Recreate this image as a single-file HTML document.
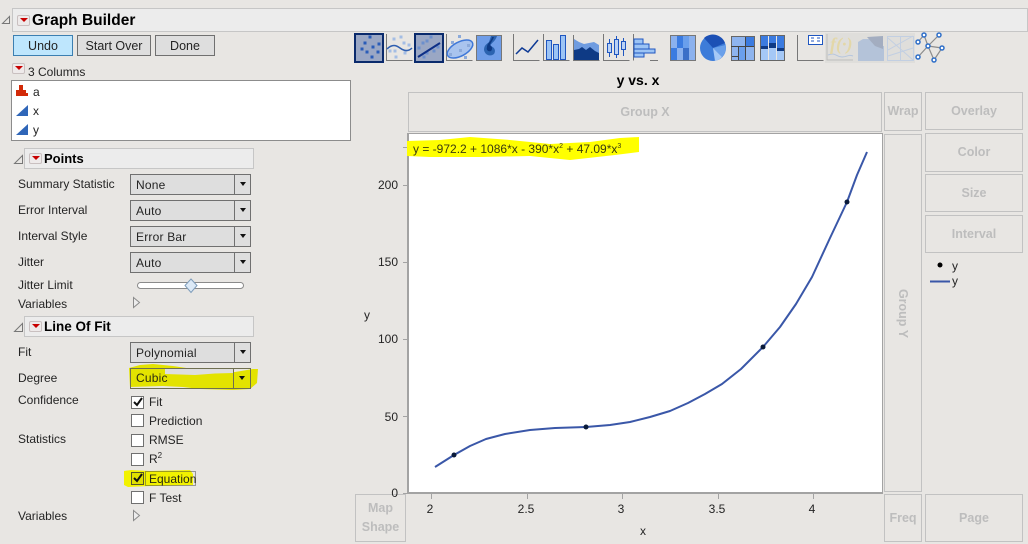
<!DOCTYPE html>
<html><head><meta charset="utf-8">
<style>
html,body{margin:0;padding:0}
body{width:1028px;height:544px;overflow:hidden;background:#e8e6e3;position:relative;font-family:"Liberation Sans",sans-serif;font-size:12px;color:#242424}
.t{position:absolute;line-height:16px;white-space:nowrap}
.b{position:absolute;box-sizing:border-box}
.sel{position:absolute;box-sizing:border-box;left:130px;width:121px;height:21px;background:#dedede;border:1px solid #707070;line-height:20px;padding-left:5px;letter-spacing:.2px}
.sel i{position:absolute;left:103px;top:0;width:16px;height:19px;border-left:1px solid #707070}
.sel i:after{content:"";position:absolute;left:5px;top:7px;border-style:solid;border-width:4px 3px 0 3px;border-color:#111 transparent transparent transparent}
.btn{position:absolute;box-sizing:border-box;top:35px;height:21px;background:#dedede;border:1px solid #707070;text-align:center;line-height:20px;font-size:12.5px}
.z{position:absolute;box-sizing:border-box;border:1px solid #c2c2c2;display:flex;align-items:center;justify-content:center;text-align:center;font-weight:bold;color:#bdbdbd;font-size:12.5px;line-height:19px}
.hd{position:absolute;box-sizing:border-box;background:#ececec;border:1px solid #c6c6c6}
.m{position:absolute;width:13px;height:11px;box-sizing:border-box;background:#eeeaea;border:1px solid #c9c0c0;border-radius:2px}
.m:after{content:"";position:absolute;left:2px;top:2px;border-style:solid;border-width:4px 4px 0 4px;border-color:#c80000 transparent transparent transparent}
.cb{position:absolute;left:131px;width:13px;height:13px;box-sizing:border-box;background:#fff;border:1px solid #707070}
svg{position:absolute;left:0;top:0}
</style></head>
<body>
<div class="hd" style="left:12px;top:8px;width:1016px;height:24px"></div>
<div class="m" style="left:17px;top:15px"></div>
<div class="t" style="left:32px;top:13px;font-size:15.500px;font-weight:bold;color:#000">Graph Builder</div>
<div class="btn" style="left:13px;width:60px;background:#bee6fd;border-color:#3c7fb1">Undo</div>
<div class="btn" style="left:77px;width:74px">Start Over</div>
<div class="btn" style="left:155px;width:60px">Done</div>
<div class="m" style="left:12px;top:63px"></div>
<div class="t" style="left:28px;top:64px">3 Columns</div>
<div class="b" style="left:11px;top:80px;width:340px;height:61px;background:#fff;border:1px solid #8c8c8c"></div>
<div class="t" style="left:33px;top:84px">a</div>
<div class="t" style="left:33px;top:103px">x</div>
<div class="t" style="left:33px;top:122px">y</div>

<div class="hd" style="left:24px;top:148px;width:230px;height:21px"></div>
<div class="m" style="left:29px;top:153px"></div>
<div class="t" style="left:44px;top:151px;font-weight:bold;font-size:13px;color:#000">Points</div>
<div class="hd" style="left:24px;top:316px;width:230px;height:21px"></div>
<div class="m" style="left:29px;top:321px"></div>
<div class="t" style="left:44px;top:319px;font-weight:bold;font-size:13.500px;color:#000">Line Of Fit</div>

<div class="t" style="left:18px;top:176px">Summary Statistic</div>
<div class="t" style="left:18px;top:202px">Error Interval</div>
<div class="t" style="left:18px;top:228px">Interval Style</div>
<div class="t" style="left:18px;top:254px">Jitter</div>
<div class="t" style="left:18px;top:277px">Jitter Limit</div>
<div class="t" style="left:18px;top:296px">Variables</div>
<div class="t" style="left:18px;top:344px">Fit</div>
<div class="t" style="left:18px;top:370px">Degree</div>
<div class="t" style="left:18px;top:392px">Confidence</div>
<div class="t" style="left:18px;top:431px">Statistics</div>
<div class="t" style="left:18px;top:508px">Variables</div>

<div class="sel" style="top:174px">None<i></i></div>
<div class="sel" style="top:200px">Auto<i></i></div>
<div class="sel" style="top:226px">Error Bar<i></i></div>
<div class="sel" style="top:252px">Auto<i></i></div>
<div class="sel" style="top:342px">Polynomial<i></i></div>

<div class="cb" style="top:396px"></div>
<div class="cb" style="top:414px"></div>
<div class="cb" style="top:434px"></div>
<div class="cb" style="top:453px"></div>
<div class="cb" style="top:491px"></div>

<!-- plot background -->
<div class="b" style="left:407px;top:133px;width:476px;height:361px;background:#fff;border-left:2px solid #a3a3a3;border-top:1px solid #a3a3a3;border-right:1px solid #a3a3a3;border-bottom:2px solid #a3a3a3"></div>

<svg width="1028" height="544" viewBox="0 0 1028 544" fill="none">
<!-- Cubic highlight -->
<path d="M129 368L140 365L153 364L173 366L193 369L220 372L235 372L253 369L258 369L257 383L250 389L233 390L200 389L183 387L163 386L130 387Z" fill="#e3e300"/>
<path d="M165 369H233V373L215 373.500L195 375L180 374.500L165 374Z" fill="#dedede"/>
<path d="M130.500 368.500H250.500V388.500H130.500ZM233.500 368.500V388.500" stroke="#6f6f50"/>
<path d="M239 376h6l-3 4z" fill="#111"/>
<!-- Equation highlight -->
<path d="M124 471L131 470L150 471L190 470L193 474L193 485L150 486L128 487L124 485Z" fill="#f2f200"/>
<rect x="131.500" y="472.500" width="12" height="12" fill="#e0e000" stroke="#55552a"/>
<rect x="145.500" y="471.500" width="50" height="14" stroke="#444" stroke-dasharray="1 1"/>
<!-- Equation in plot highlight -->
<path d="M407 141L440 140L470 137L510 140L550 144L590 142L620 138L639 137L639 152L615 155L570 160L530 156L480 157L430 157L407 156Z" fill="#ffff00"/>
<!-- slider -->
<rect x="137.500" y="282.500" width="106" height="6" rx="3" fill="#fff" stroke="#8a8a8a"/>
<path d="M191 279l6 6.500l-6 7l-6-7z" fill="#dce9f6" stroke="#7e9cba"/>
<!-- disclosure triangles -->
<path d="M2.500 23.500h7v-7z" fill="#e8e6e3" stroke="#777"/>
<path d="M14.500 163.500h8v-8z" stroke="#777"/>
<path d="M14.500 331.500h8v-8z" stroke="#777"/>
<path d="M133.500 297.500l6 5l-6 5z" fill="#ececec" stroke="#8a8a8a"/>
<path d="M133.500 510.500l6 5l-6 5z" fill="#ececec" stroke="#8a8a8a"/>
<!-- col icons -->
<path d="M16 96v-6h3v-5h4v5h3v3h2v3z" fill="#d22a08"/>
<path d="M16 116l12-11v11z" fill="#2f66b8"/>
<path d="M16 135l12-11v11z" fill="#2f66b8"/>
<!-- checks -->
<path d="M134 402l3 3l5-7" stroke="#111" stroke-width="2"/>
<path d="M134 478l3 3l5-7" stroke="#111" stroke-width="2"/>
<!-- axes ticks -->
<path d="M403 185.500h4M403 262.500h4M403 339.500h4M403 416.500h4M403 493.500h4M403 147.500h4M431.500 494v5M527.500 494v5M622.500 494v5M718.500 494v5M813.500 494v5" stroke="#a3a3a3"/>
<!-- curve -->
<polyline points="435,467 454,455 470,446 486,439 505,434 530,430 555,428 586,427 610,425 630,422 650,417 670,411 688,403 705,394 722,384 741,369 763,347 780,327 796,304 812,277 830,238 847,202 857,175 867,152" stroke="#3a57a8" stroke-width="2" stroke-linejoin="round"/>
<circle cx="454" cy="455" r="2.500" fill="#0a1a3a"/><circle cx="586" cy="427" r="2.500" fill="#0a1a3a"/><circle cx="763" cy="347" r="2.500" fill="#0a1a3a"/><circle cx="847" cy="202" r="2.500" fill="#0a1a3a"/>
<!-- legend -->
<circle cx="940" cy="265" r="2.500" fill="#000"/>
<path d="M930 281.500h20" stroke="#3a57a8" stroke-width="2"/>

<!-- toolbar icons -->
<rect x="355" y="34" width="28" height="28" fill="#9aa7c4" stroke="#0a2a6c" stroke-width="2"/>
<g fill="#2a5cb8"><rect x="368.500" y="35.500" width="3" height="3"/><rect x="363.500" y="41.500" width="3" height="3"/><rect x="377.500" y="42.500" width="3" height="3"/><rect x="371.500" y="45.500" width="3" height="3"/><rect x="360.500" y="47.500" width="3" height="3"/><rect x="376.500" y="50.500" width="3" height="3"/><rect x="365.500" y="50.500" width="3" height="3"/><rect x="370.500" y="55.500" width="3" height="3"/></g>
<path d="M386.500 34v26.500h26" stroke="#777"/>
<g fill="#a4bde4"><rect x="399.500" y="35.500" width="3" height="3"/><rect x="392.500" y="37.500" width="3" height="3"/><rect x="402.500" y="41.500" width="3" height="3"/><rect x="407.500" y="43.500" width="3" height="3"/><rect x="393.500" y="49.500" width="3" height="3"/><rect x="388.500" y="49.500" width="3" height="3"/><rect x="403.500" y="51.500" width="3" height="3"/><rect x="394.500" y="55.500" width="3" height="3"/></g>
<path d="M387 49C392 44 396 45 400 48S408 52 412 48" stroke="#2f5fb0" stroke-width="1.500"/>
<rect x="415" y="34" width="28" height="28" fill="#9aa7c4" stroke="#0a2a6c" stroke-width="2"/>
<g fill="#6c8fcc"><rect x="429.500" y="35.500" width="3" height="3"/><rect x="425.500" y="39.500" width="3" height="3"/><rect x="421.500" y="41.500" width="3" height="3"/><rect x="417.500" y="46.500" width="3" height="3"/><rect x="436.500" y="45.500" width="3" height="3"/><rect x="432.500" y="49.500" width="3" height="3"/><rect x="425.500" y="51.500" width="3" height="3"/><rect x="422.500" y="55.500" width="3" height="3"/></g>
<path d="M418 57L440 43" stroke="#0e2f86" stroke-width="2"/>
<path d="M446.500 34v26.500h26" stroke="#777"/>
<ellipse cx="460" cy="49" rx="14" ry="7" transform="rotate(-28 460 49)" fill="#a9c4ee" stroke="#3f78d8" stroke-width="1.500"/>
<g fill="#8caada"><rect x="458" y="35" width="3" height="3"/><rect x="451" y="41" width="3" height="3"/><rect x="467" y="44" width="3" height="3"/><rect x="459" y="49" width="3" height="3"/><rect x="464" y="56" width="3" height="3"/><rect x="449" y="53" width="3" height="3"/></g>
<rect x="476.500" y="35.500" width="25" height="25" fill="#6f9de8" stroke="#777"/>
<path d="M497 36c-2 6-5 6-7 10c5 1 6 5 4 8c-4 3-9 1-10-4c0-5 3-6 5-8l2-6z" fill="#2b63b0"/>
<path d="M492 37c-1 5-5 6-5 10c-1 3 1 5 4 4c2-2 1-5-1-6c1-3 3-5 4-8z" fill="#0e3a85"/>
<path d="M513.500 34v26.500h26" stroke="#777"/>
<path d="M516 54l6-6l6 4l10-12" stroke="#0e3a95" stroke-width="1.500"/>
<path d="M543.500 34v26.500h26" stroke="#777"/>
<g fill="#9cc4f5" stroke="#1f56c0"><rect x="546.500" y="40.500" width="5" height="19"/><rect x="553.500" y="44.500" width="5" height="15"/><rect x="560.500" y="35.500" width="5" height="24"/></g>
<path d="M573.500 35v25.500h26" stroke="#777"/>
<path d="M574 39l5 3l5 2l5-1l5-1l5 3v15h-25z" fill="#6f9ce0"/>
<path d="M574 50l5-1l3-2l4 3l4-3l5 4l4 2v7h-25z" fill="#0e3a85"/>
<path d="M603.500 34v26.500h26" stroke="#777"/>
<path d="M609.500 39v18M616.500 36v22M623.500 38v18" stroke="#1f56c0"/>
<g fill="#bcd3f5" stroke="#1f56c0"><rect x="607.500" y="43.500" width="4" height="9"/><rect x="614.500" y="39.500" width="4" height="15"/><rect x="621.500" y="41.500" width="4" height="8"/></g>
<path d="M633.500 34v26.500" stroke="#777"/>
<g fill="#9cc4f5" stroke="#1f56c0"><rect x="634" y="39" width="9" height="5"/><rect x="634" y="44" width="15" height="5"/><rect x="634" y="49" width="21" height="4"/><rect x="634" y="53" width="10" height="4"/></g>
<path d="M650 60.500h8" stroke="#777"/>
<rect x="670.500" y="35.500" width="25" height="25" fill="#8bb1ee" stroke="#777"/>
<rect x="677" y="36" width="6" height="12" fill="#3b7be0"/><rect x="683" y="36" width="6" height="12" fill="#6a9fec"/><rect x="671" y="48" width="6" height="12" fill="#3b7be0"/><rect x="683" y="48" width="6" height="12" fill="#3b6fc8"/>
<circle cx="713" cy="48" r="13" fill="#3d7cd9"/>
<path d="M713 48L704 38a13 13 0 0 1 21 5z" fill="#1c50b5"/>
<path d="M713 48l12.500-3a13 13 0 0 1-3.500 12z" fill="#6aa0ea"/>
<path d="M713 48l9 9a13 13 0 0 1-7 4z" fill="#a5c8f6"/>
<rect x="731.500" y="36.500" width="23" height="24" fill="#8eb4ee" stroke="#666"/>
<rect x="745" y="37" width="9" height="9" fill="#3b7be0"/>
<rect x="739" y="47" width="6" height="13" fill="#6a9fec"/>
<path d="M731 46.500h23M745.500 37v23M738.500 47v13M732 56.500h6" stroke="#444"/>
<rect x="760.500" y="35.500" width="24" height="25" fill="#a5c8f6" stroke="#666"/>
<rect x="761" y="36" width="7" height="10" fill="#3b7be0"/><rect x="761" y="46" width="7" height="3" fill="#0e3a85"/>
<rect x="769" y="36" width="7" height="8" fill="#3b7be0"/><rect x="769" y="43" width="7" height="5" fill="#0e3a85"/>
<rect x="777" y="36" width="7" height="12" fill="#3b7be0"/><rect x="777" y="48" width="7" height="3" fill="#0e3a85"/>
<path d="M768.500 36v24M776.500 36v24" stroke="#e8e6e3"/>
<path d="M797.500 35v25.500h26" stroke="#777"/>
<rect x="808.500" y="35.500" width="14" height="9" fill="#fff" stroke="#1f56c0"/>
<path d="M811 38h3M811 41h3M817 38h3M817 41h3" stroke="#1f56c0"/>
<rect x="825" y="33" width="90" height="30" fill="#dfdedb"/>
<path d="M827 34v26h26" stroke="#bdbdbd"/>
<path d="M828 55c8-3 8 2 14 2s6-3 11-1" stroke="#b6c6dd"/>
<text x="830" y="50" font-family="Liberation Serif,serif" font-style="italic" font-weight="bold" font-size="18" fill="#e3d7a8">f(·)</text>
<path d="M858 42l5-3h11l2 7l8 0v15h-26z" fill="#b4c3d9"/>
<path d="M867 37l16-1v13l-8-3z" fill="#a3adc0"/>
<path d="M887.500 36.500h26v24h-26zM900.500 36v25M888 38l25 22M888 50l25-14M888 56l25-8" stroke="#c2cfe2"/>
<path d="M928 46L939 35M928 46L918 57M928 46L924 35M928 46L942 48M928 46L934 60M942 48L934 60M918 42L924 35" stroke="#8c8c8c" stroke-width="1.200"/>
<g fill="#fff" stroke="#2f6fc8" stroke-width="1.500"><circle cx="924" cy="35" r="2"/><circle cx="939" cy="35" r="2"/><circle cx="918" cy="42" r="2"/><circle cx="928" cy="46" r="2"/><circle cx="942" cy="48" r="2"/><circle cx="918" cy="57" r="2"/><circle cx="934" cy="60" r="2"/></g>
</svg>

<div class="t" style="left:136px;top:370px;letter-spacing:.2px;color:#2a2a10">Cubic</div>
<div class="t" style="left:149px;top:394px">Fit</div>
<div class="t" style="left:149px;top:413px">Prediction</div>
<div class="t" style="left:149px;top:432px">RMSE</div>
<div class="t" style="left:149px;top:451px">R<sup style="font-size:8px;line-height:0">2</sup></div>
<div class="t" style="left:149px;top:471px;color:#2a2a10">Equation</div>
<div class="t" style="left:149px;top:490px">F Test</div>

<div class="t" style="left:538px;width:200px;text-align:center;top:72px;font-size:14px;font-weight:bold;color:#000">y vs. x</div>
<div class="z" style="left:408px;top:92px;width:474px;height:40px">Group X</div>
<div class="z" style="left:884px;top:92px;width:38px;height:39px">Wrap</div>
<div class="z" style="left:884px;top:134px;width:38px;height:358px"><span style="display:block;transform:rotate(90deg);white-space:nowrap">Group Y</span></div>
<div class="z" style="left:925px;top:92px;width:98px;height:38px">Overlay</div>
<div class="z" style="left:925px;top:133px;width:98px;height:39px">Color</div>
<div class="z" style="left:925px;top:174px;width:98px;height:38px">Size</div>
<div class="z" style="left:925px;top:215px;width:98px;height:38px">Interval</div>
<div class="z" style="left:355px;top:494px;width:51px;height:48px">Map<br>Shape</div>
<div class="z" style="left:884px;top:494px;width:38px;height:48px">Freq</div>
<div class="z" style="left:925px;top:494px;width:98px;height:48px">Page</div>

<div class="t" style="left:413px;top:141px;font-size:12px;color:#3a3a10">y = -972.2 + 1086*x - 390*x<sup style="font-size:7px;line-height:0">2</sup> + 47.09*x<sup style="font-size:7px;line-height:0">3</sup></div>
<div class="t" style="left:358px;width:40px;text-align:right;top:177px">200</div>
<div class="t" style="left:358px;width:40px;text-align:right;top:254px">150</div>
<div class="t" style="left:358px;width:40px;text-align:right;top:331px">100</div>
<div class="t" style="left:358px;width:40px;text-align:right;top:409px">50</div>
<div class="t" style="left:358px;width:40px;text-align:right;top:485px">0</div>
<div class="t" style="left:364px;top:307px">y</div>
<div class="t" style="left:410px;width:40px;text-align:center;top:501px">2</div>
<div class="t" style="left:506px;width:40px;text-align:center;top:501px">2.5</div>
<div class="t" style="left:601px;width:40px;text-align:center;top:501px">3</div>
<div class="t" style="left:697px;width:40px;text-align:center;top:501px">3.5</div>
<div class="t" style="left:792px;width:40px;text-align:center;top:501px">4</div>
<div class="t" style="left:640px;top:523px">x</div>
<div class="t" style="left:952px;top:258px">y</div>
<div class="t" style="left:952px;top:273px">y</div>
</body></html>
